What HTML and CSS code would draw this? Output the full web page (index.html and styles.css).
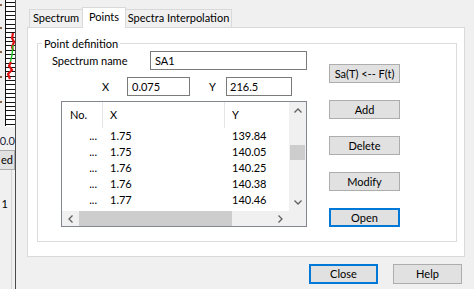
FILE: index.html
```html
<!DOCTYPE html>
<html>
<head>
<meta charset="utf-8">
<link rel="stylesheet" href="styles.css">
</head>
<body>
<div class="app">
  <div class="side">
    <svg class="ladder" viewBox="0 0 15 127" width="15" height="127">
      <rect x="5" y="0" width="10" height="127" fill="#fff"/>
      <path d="M5 2.5h10M5 6.5h10M5 11.5h10M5 15.5h10M5 19.5h10M5 24.5h10M5 28.5h10M5 32.5h10M5 37.5h10M5 41.5h10M5 45.5h10M5 50.5h10M5 54.5h10M5 58.5h10M5 63.5h10M5 67.5h10M5 71.5h10M5 76.5h10M5 80.5h10M5 84.5h10M5 89.5h10M5 93.5h10M5 97.5h10M5 102.5h10M5 106.5h10M5 110.5h10M5 115.5h10M5 119.5h10M5 124.5h10" stroke="#111" stroke-width="1"/>
      <line x1="5.5" y1="0" x2="5.5" y2="126" stroke="#111"/>
      <g fill="#8a6248">
        <rect x="0" y="4" width="2" height="2"/>
        <rect x="0" y="27" width="2" height="2"/>
        <rect x="0" y="51" width="2" height="2"/>
        <rect x="0" y="76" width="2" height="2"/>
        <rect x="0" y="101" width="2" height="2"/>
      </g>
      <path d="M13 33 L12 38 L14 42 L12 47 L13 50" stroke="#e01010" stroke-width="2.2" fill="none"/>
      <path d="M13 45 L12 55 L10 64" stroke="#22c422" stroke-width="1.4" fill="none"/>
      <path d="M11 62 L9 66 L12 70 L8 74 L10 79" stroke="#e01010" stroke-width="2.2" fill="none"/>
    </svg>
    <div class="side-val">0.0</div>
    <div class="side-btn">ed</div>
    <div class="side-rest"><div class="side-cell">1</div></div>
  </div>

  <div class="dialog">
    <div class="tabs">
      <div class="tab tab-spectrum">Spectrum</div>
      <div class="tab tab-points is-active">Points</div>
      <div class="tab tab-interp">Spectra Interpolation</div>
    </div>

    <div class="panel">
      <fieldset class="group">
        <legend class="group-title">Point definition</legend>
        <div class="group-body">
          <div class="fields">
            <div class="row">
              <span class="lbl lbl-name">Spectrum name</span>
              <div class="input input-name">SA1</div>
            </div>
            <div class="row row-xy">
              <span class="lbl lbl-x">X</span>
              <div class="input input-x">0.075</div>
              <span class="lbl lbl-y">Y</span>
              <div class="input input-y">216.5</div>
            </div>
            <div class="list">
              <div class="list-view">
                <div class="lv-row lv-head">
                  <span class="c-no">No.</span><span class="c-x">X</span><span class="c-y">Y</span>
                </div>
                <div class="lv-row"><span class="c-no">...</span><span class="c-x">1.75</span><span class="c-y">139.84</span></div>
                <div class="lv-row"><span class="c-no">...</span><span class="c-x">1.75</span><span class="c-y">140.05</span></div>
                <div class="lv-row"><span class="c-no">...</span><span class="c-x">1.76</span><span class="c-y">140.25</span></div>
                <div class="lv-row"><span class="c-no">...</span><span class="c-x">1.76</span><span class="c-y">140.38</span></div>
                <div class="lv-row"><span class="c-no">...</span><span class="c-x">1.77</span><span class="c-y">140.46</span></div>
              </div>
              <div class="vscroll">
                <div class="sb-btn"><svg width="8" height="5" viewBox="0 0 8 5"><polyline points="0.5,4.5 4,1 7.5,4.5" fill="none" stroke="#606060" stroke-width="1.3"/></svg></div>
                <div class="sb-track-v"><div class="thumb-v"></div></div>
                <div class="sb-btn"><svg width="8" height="5" viewBox="0 0 8 5"><polyline points="0.5,0.5 4,4 7.5,0.5" fill="none" stroke="#606060" stroke-width="1.3"/></svg></div>
              </div>
              <div class="hscroll">
                <div class="sb-btn-h"><svg width="5" height="8" viewBox="0 0 5 8"><polyline points="4.5,0.5 1,4 4.5,7.5" fill="none" stroke="#606060" stroke-width="1.3"/></svg></div>
                <div class="sb-track-h"><div class="thumb-h"></div></div>
                <div class="sb-btn-h"><svg width="5" height="8" viewBox="0 0 5 8"><polyline points="0.5,0.5 4,4 0.5,7.5" fill="none" stroke="#606060" stroke-width="1.3"/></svg></div>
              </div>
              <div class="corner"></div>
            </div>
          </div>
          <div class="actions">
            <div class="btn">Sa(T) &lt;-- F(t)</div>
            <div class="btn">Add</div>
            <div class="btn">Delete</div>
            <div class="btn">Modify</div>
            <div class="btn btn-focus">Open</div>
          </div>
        </div>
      </fieldset>
    </div>

    <div class="footer">
      <div class="btn btn-foot btn-focus">Close</div>
      <div class="btn btn-foot">Help</div>
    </div>
  </div>
</div>
</body>
</html>
```

FILE: styles.css
```css
* { box-sizing: border-box; }
html, body { margin: 0; padding: 0; }
body {
  background: #f0f0f0;
  font-family: Lato, "Noto Sans", "DejaVu Sans", sans-serif;
  font-size: 11px;
  line-height: 15px;
  color: #000;
  overflow: hidden;
  width: 474px;
  height: 289px;
}
.app { display: flex; height: 289px; }

/* left strip */
.side {
  flex: none;
  width: 16px;
  border-right: 1px solid #4a4a4a;
  display: flex;
  flex-direction: column;
  overflow: hidden;
}
.ladder { display: block; flex: none; }
.side-val {
  margin-top: 6px;
  height: 15px;
  text-align: right;
  white-space: nowrap;
  color: #1c2440;
  direction: rtl;
}
.side-btn {
  margin-top: 2px;
  height: 20px;
  line-height: 18px;
  background: #e1e1e1;
  border: 1px solid #adadad;
  border-left: none;
  text-align: right;
  padding-right: 1px;
  white-space: nowrap;
}
.side-rest { flex: 1; display: flex; }
.side-cell {
  width: 12px;
  border-right: 1px solid #d4d4d4;
  text-align: right;
  padding-right: 3px;
  padding-top: 26px;
}

/* dialog */
.dialog { flex: 1; display: flex; flex-direction: column; }
.tabs {
  display: flex;
  align-items: flex-end;
  margin-top: 7px;
  height: 20px;
  padding-left: 13px;
}
.tab {
  height: 18px;
  line-height: 16px;
  border: 1px solid #d9d9d9;
  border-bottom: none;
  background: #f0f0f0;
  text-align: center;
  white-space: nowrap;
}
.tab-spectrum { width: 54px; }
.tab-points { width: 44px; margin-left: -1px; }
.tab-interp { width: 107px; margin-left: -1px; }
.tab.is-active {
  height: 21px;
  margin-bottom: -1px;
  background: #fff;
  position: relative;
  z-index: 1;
  padding-top: 1px;
}

.panel {
  margin-left: 11px;
  width: 438px;
  height: 230px;
  background: #fff;
  border: 1px solid #d9d9d9;
  padding: 8px 7px 0 9px;
}
.group {
  margin: 0;
  padding: 0 0 14px 0;
  border: 1px solid #dcdcdc;
  min-width: 0;
}
.group-title {
  margin-left: 4px;
  padding: 0 2px;
  line-height: 15px;
}
.group-body { display: flex; padding-left: 14px; }
.fields { width: 255px; }
.row { display: flex; height: 19px; }
.row-xy { margin-top: 7px; }
.lbl { line-height: 19px; white-space: nowrap; }
.lbl-name { width: 98px; }
.lbl-x { width: 75px; padding-left: 50px; }
.lbl-y { width: 36px; padding-left: 19px; }
.input {
  height: 19px;
  line-height: 17px;
  border: 1px solid #7a7a7a;
  background: #fff;
  padding-left: 4px;
}
.input-name { width: 157px; }
.input-x { width: 63px; }
.input-y { width: 66px; padding-left: 3px; }

/* list view */
.list {
  margin-top: 5px;
  margin-left: 9px;
  width: 246px;
  height: 126px;
  border: 1px solid #828790;
  display: grid;
  grid-template-columns: 1fr 17px;
  grid-template-rows: 1fr 15px;
  background: #fff;
}
.list-view { overflow: hidden; }
.lv-row { display: flex; height: 16px; line-height: 16px; white-space: nowrap; }
.lv-head { height: 26px; line-height: 25px; }
.c-no { flex: none; width: 41px; text-align: right; padding-right: 6px; }
.c-x { flex: none; width: 122px; padding-left: 7px; }
.c-y { flex: none; width: 100px; padding-left: 7px; }
.lv-head .c-no { text-align: left; padding-left: 8px; padding-right: 0; border-right: 1px solid #e5e5e5; }
.lv-head .c-x { border-right: 1px solid #e5e5e5; }

.vscroll { background: #f0f0f0; display: flex; flex-direction: column; }
.sb-btn { height: 17px; display: flex; align-items: center; justify-content: center; flex: none; }
.sb-btn svg { display: block; }
.sb-track-v { flex: 1; padding-top: 26px; }
.thumb-v { height: 15px; margin: 0 1px; background: #cdcdcd; }
.hscroll { background: #f0f0f0; display: flex; }
.sb-btn-h { width: 17px; display: flex; align-items: center; justify-content: center; flex: none; }
.sb-btn-h svg { display: block; }
.sb-track-h { flex: 1; }
.thumb-h { width: 153px; height: 15px; background: #cdcdcd; }
.corner { background: #f0f0f0; }

/* buttons */
.actions {
  margin-left: 22px;
  padding-top: 13px;
  display: flex;
  flex-direction: column;
  gap: 17px;
}
.btn {
  width: 71px;
  height: 19px;
  line-height: 17px;
  background: #e1e1e1;
  border: 1px solid #adadad;
  text-align: center;
  white-space: nowrap;
}
.btn-focus { border-color: #0078d7; box-shadow: inset 0 0 0 1px #0078d7; }

.footer {
  margin-top: 7px;
  display: flex;
  justify-content: flex-end;
  gap: 15px;
  padding-right: 12px;
}
.btn-foot { width: 69px; height: 20px; line-height: 18px; }
```
